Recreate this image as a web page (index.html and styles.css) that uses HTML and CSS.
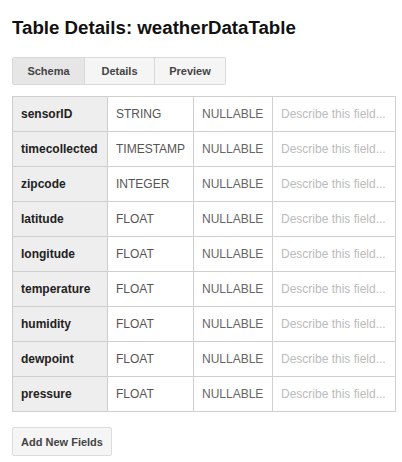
FILE: index.html
```html
<!DOCTYPE html>
<html>
<head>
<meta charset="utf-8">
<link rel="stylesheet" href="styles.css">
</head>
<body>
<div class="page">
  <h1 class="title">Table Details: weatherDataTable</h1>
  <div class="tabs">
    <div class="tab active">Schema</div>
    <div class="tab">Details</div>
    <div class="tab">Preview</div>
  </div>
  <table class="schema">
    <colgroup>
      <col class="c1"><col class="c2"><col class="c3"><col class="c4">
    </colgroup>
    <tbody>
      <tr><td class="name">sensorID</td><td class="type">STRING</td><td class="mode">NULLABLE</td><td class="desc">Describe this field...</td></tr>
      <tr><td class="name">timecollected</td><td class="type">TIMESTAMP</td><td class="mode">NULLABLE</td><td class="desc">Describe this field...</td></tr>
      <tr><td class="name">zipcode</td><td class="type">INTEGER</td><td class="mode">NULLABLE</td><td class="desc">Describe this field...</td></tr>
      <tr><td class="name">latitude</td><td class="type">FLOAT</td><td class="mode">NULLABLE</td><td class="desc">Describe this field...</td></tr>
      <tr><td class="name">longitude</td><td class="type">FLOAT</td><td class="mode">NULLABLE</td><td class="desc">Describe this field...</td></tr>
      <tr><td class="name">temperature</td><td class="type">FLOAT</td><td class="mode">NULLABLE</td><td class="desc">Describe this field...</td></tr>
      <tr><td class="name">humidity</td><td class="type">FLOAT</td><td class="mode">NULLABLE</td><td class="desc">Describe this field...</td></tr>
      <tr><td class="name">dewpoint</td><td class="type">FLOAT</td><td class="mode">NULLABLE</td><td class="desc">Describe this field...</td></tr>
      <tr><td class="name">pressure</td><td class="type">FLOAT</td><td class="mode">NULLABLE</td><td class="desc">Describe this field...</td></tr>
    </tbody>
  </table>
  <button class="add-btn">Add New Fields</button>
</div>
</body>
</html>
```

FILE: styles.css
```css
html, body {
  margin: 0;
  padding: 0;
  background: #fff;
  font-family: "Liberation Sans", Arial, sans-serif;
}
.page {
  padding: 17px 12px 0 12px;
  display: flex;
  flex-direction: column;
  align-items: flex-start;
}
.title {
  margin: 0;
  font-size: 18.7px;
  line-height: 21px;
  font-weight: bold;
  color: #111;
}
.tabs {
  margin-top: 19px;
  display: flex;
  border: 1px solid #d9d9d9;
  border-radius: 2px;
  background: #f5f5f5;
}
.tab {
  height: 26px;
  line-height: 26px;
  width: 69px;
  text-align: center;
  font-size: 11px;
  font-weight: bold;
  color: #444;
  border-left: 1px solid #d9d9d9;
}
.tab:first-child {
  border-left: none;
  width: 71px;
}
.tab:last-child {
  width: 70px;
}
.tab.active {
  background: #e6e6e6;
}
.schema {
  margin-top: 11px;
  border-collapse: collapse;
  width: 383px;
  table-layout: fixed;
  font-size: 12px;
}
.c1 { width: 95px; }
.c2 { width: 86px; }
.c3 { width: 79px; }
.c4 { width: 123px; }
.schema td {
  border: 1px solid #cfcfcf;
  height: 34px;
  padding: 0 8px;
  white-space: nowrap;
  overflow: hidden;
}
.name {
  background: #eeeeee;
  font-weight: bold;
  color: #222;
}
.type {
  color: #555;
}
.mode {
  color: #666;
}
.desc {
  color: #bbb;
}
.add-btn {
  margin-top: 15px;
  height: 29px;
  width: 100px;
  padding: 0;
  text-align: center;
  font-family: "Liberation Sans", Arial, sans-serif;
  font-size: 11px;
  font-weight: bold;
  color: #444;
  background: #f5f5f5;
  border: 1px solid #dcdcdc;
  border-radius: 2px;
}
```
